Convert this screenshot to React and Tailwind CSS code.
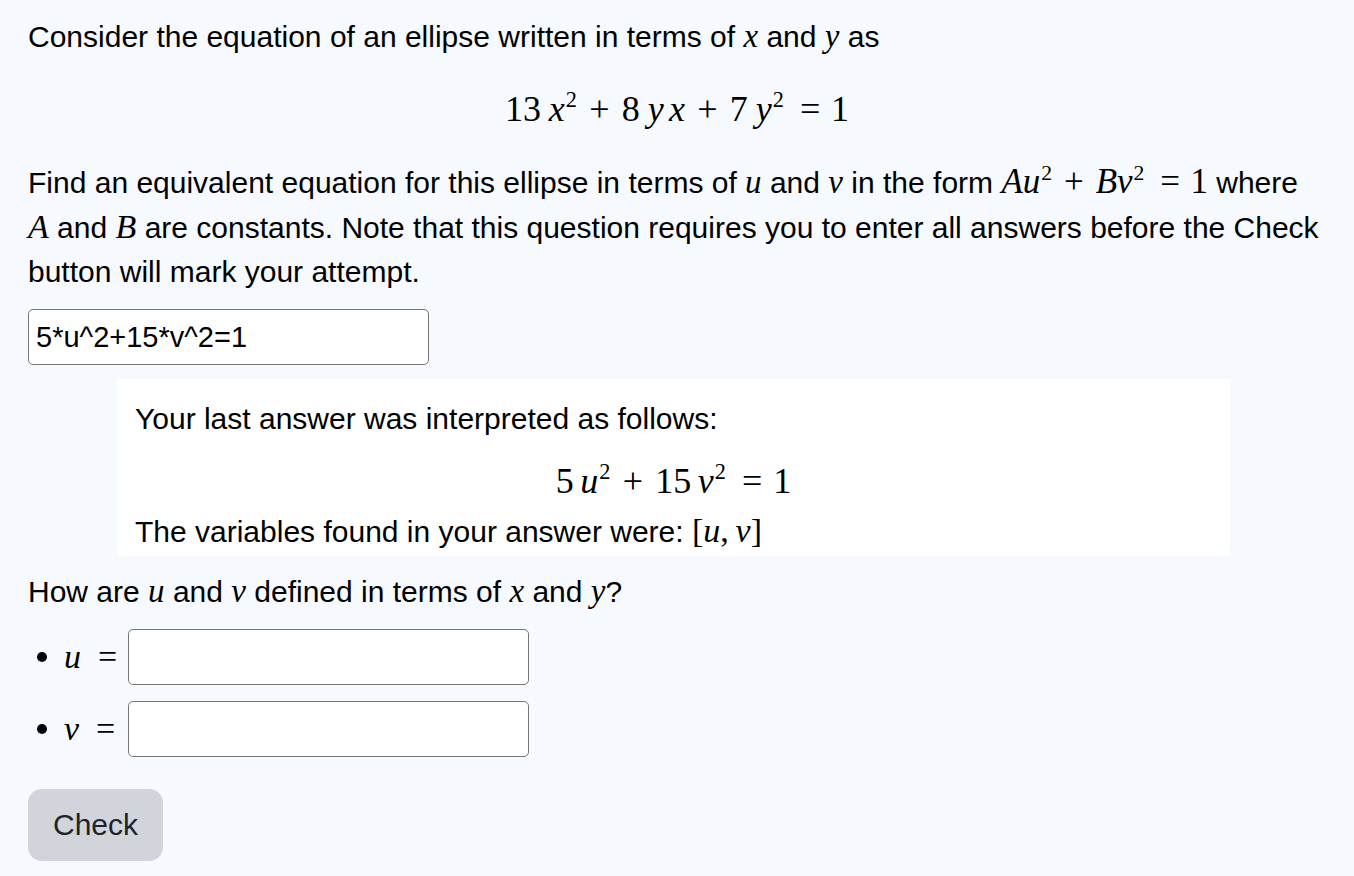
import React from 'react';

const serif = "font-['Liberation_Serif','Times_New_Roman',serif]";

const V = ({ children }) => <span className="italic">{children}</span>;
const Sq = () => <sup className="text-[0.62em] relative -top-[0.62em] ml-[1px] leading-none">2</sup>;
const Op = ({ children }) => <span className="mx-[0.34em]">{children}</span>;
const Eq = () => <span className="ml-[0.45em] mr-[0.3em]">=</span>;

const Field = ({ value = '', className = '' }) => (
  <input
    readOnly
    value={value}
    className={`h-[56px] w-[401px] rounded-[5px] border border-[#767676] bg-white px-[7px] text-[29px] text-black outline-none ${className}`}
  />
);

export default function App() {
  return (
    <div className="min-h-screen bg-[#f6f9fd] px-[28px] pt-[14px] font-['Liberation_Sans',Arial,sans-serif] text-[30px] leading-[44px] text-black">
      <p>
        Consider the equation of an ellipse written in terms of{' '}
        <span className={`${serif} italic text-[33px]`}>x</span> and{' '}
        <span className={`${serif} italic text-[33px]`}>y</span> as
      </p>

      <div className={`${serif} mt-[28px] h-[44px] text-center text-[36px] leading-[44px]`}>
        13<span className="ml-[0.22em]"><V>x</V><Sq /></span>
        <Op>+</Op>8<span className="ml-[0.22em]"><V>y</V></span>
        <span className="ml-[0.15em]"><V>x</V></span>
        <Op>+</Op>7<span className="ml-[0.22em]"><V>y</V><Sq /></span>
        <Eq />1
      </div>

      <p className="mt-[29px] pr-[6px]">
        Find an equivalent equation for this ellipse in terms of{' '}
        <span className={`${serif} italic text-[33px]`}>u</span> and{' '}
        <span className={`${serif} italic text-[33px]`}>v</span> in the form{' '}
        <span className={`${serif} text-[35px]`}>
          <V>Au</V><Sq /><Op>+</Op><V>Bv</V><Sq /><Eq />1
        </span>{' '}
        where <span className={`${serif} italic text-[34px]`}>A</span> and{' '}
        <span className={`${serif} italic text-[34px]`}>B</span> are constants. Note that this question requires you to enter all answers before the Check
        button will mark your attempt.
      </p>

      <Field value="5*u^2+15*v^2=1" className="mt-[15px] block" />

      <div className="mt-[14px] ml-[89px] w-[1113px] bg-white px-[18px] pt-[18px] pb-[2px]">
        <p>Your last answer was interpreted as follows:</p>
        <div className={`${serif} mt-[18px] h-[44px] text-center text-[36px] leading-[44px]`}>
          5<span className="ml-[0.18em]"><V>u</V><Sq /></span>
          <Op>+</Op>15<span className="ml-[0.18em]"><V>v</V><Sq /></span>
          <Eq />1
        </div>
        <p className="mt-[6px]">
          The variables found in your answer were:{' '}
          <span className={`${serif} text-[34px]`}>
            [<V>u</V>,<span className="ml-[0.2em]"><V>v</V></span>]
          </span>
        </p>
      </div>

      <p className="mt-[13px]">
        How are <span className={`${serif} italic text-[33px]`}>u</span> and{' '}
        <span className={`${serif} italic text-[33px]`}>v</span> defined in terms of{' '}
        <span className={`${serif} italic text-[33px]`}>x</span> and{' '}
        <span className={`${serif} italic text-[33px]`}>y</span>?
      </p>

      <ul className="mt-[15px] flex flex-col gap-[16px]">
        {['u', 'v'].map((name) => (
          <li key={name} className="flex items-center">
            <span className="ml-[9px] mr-[17px] h-[10px] w-[10px] rounded-full bg-black" />
            <span className={`${serif} w-[64px] text-[34px]`}>
              <V>{name}</V>
              <span className="ml-[0.5em]">=</span>
            </span>
            <Field />
          </li>
        ))}
      </ul>

      <button className="mt-[32px] h-[72px] w-[135px] rounded-[14px] bg-[#d1d5db] text-[30px] text-[#1f2329]">
        Check
      </button>
    </div>
  );
}
